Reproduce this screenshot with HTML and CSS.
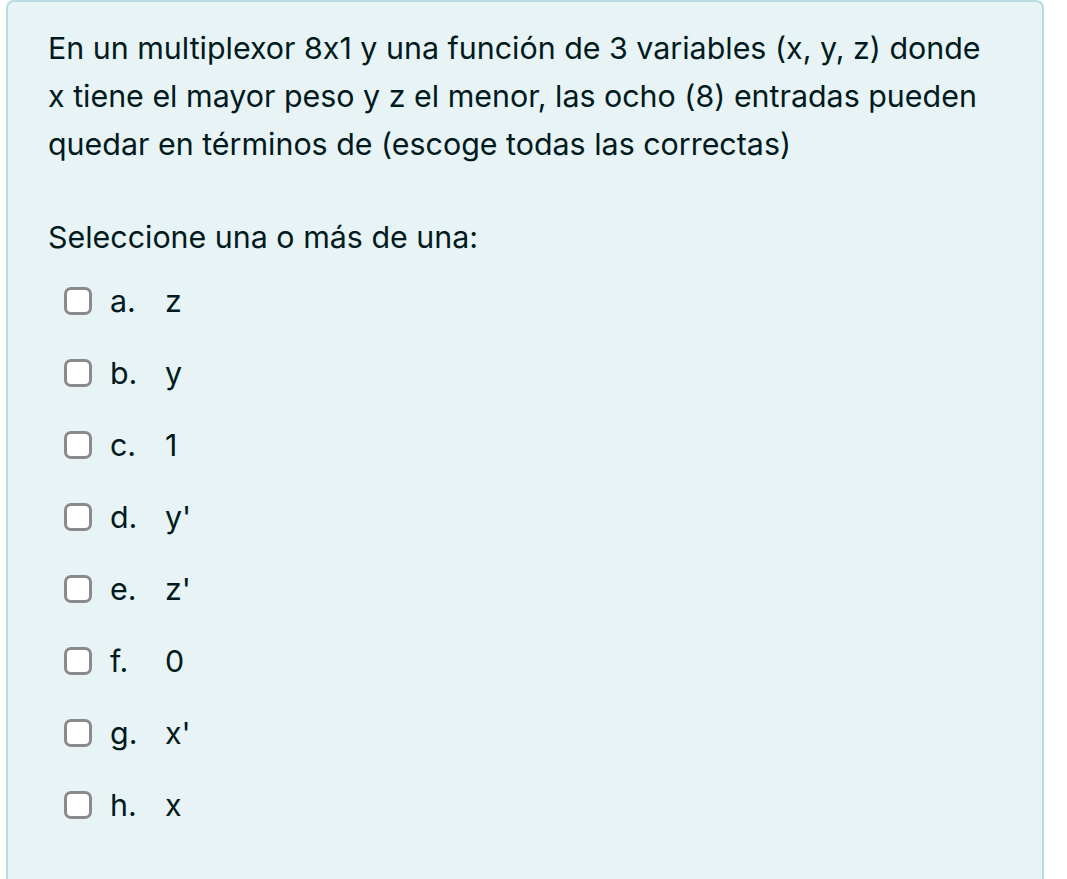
FILE: index.html
```html
<!DOCTYPE html>
<html lang="es">
<head>
<meta charset="utf-8">
<link rel="stylesheet" href="styles.css">
</head>
<body>
<div class="card">
  <p class="qtext">En un multiplexor 8x1 y una función de 3 variables (x, y, z) donde x tiene el mayor peso y z el menor, las ocho (8) entradas pueden quedar en términos de (escoge todas las correctas)</p>
  <p class="prompt">Seleccione una o más de una:</p>
  <div class="answers">
    <label class="opt"><span class="box"></span><span class="num">a.</span><span class="val">z</span></label>
    <label class="opt"><span class="box"></span><span class="num">b.</span><span class="val">y</span></label>
    <label class="opt"><span class="box"></span><span class="num">c.</span><span class="val">1</span></label>
    <label class="opt"><span class="box"></span><span class="num">d.</span><span class="val">y'</span></label>
    <label class="opt"><span class="box"></span><span class="num">e.</span><span class="val">z'</span></label>
    <label class="opt"><span class="box"></span><span class="num">f.</span><span class="val">0</span></label>
    <label class="opt"><span class="box"></span><span class="num">g.</span><span class="val">x'</span></label>
    <label class="opt"><span class="box"></span><span class="num">h.</span><span class="val">x</span></label>
  </div>
</div>
</body>
</html>
```

FILE: styles.css
```css
html, body {
  margin: 0;
  padding: 0;
  background: #ffffff;
}
body {
  font-family: Inter, "Noto Sans", "Liberation Sans", sans-serif;
  font-feature-settings: "calt" 0;
  color: #001a1e;
  font-size: 30.4px;
  line-height: 48px;
}
.card {
  margin-left: 6px;
  width: 1038px;
  height: 920px;
  background: #e7f3f5;
  border: 2px solid #b8dce2;
  border-bottom: none;
  border-radius: 8px 8px 0 0;
  padding: 22px 0 0 40px;
  box-sizing: border-box;
}
.qtext {
  margin: 0;
  width: 945px;
}
.prompt {
  margin: 45px 0 0 0;
}
.answers {
  margin-top: 4px;
  display: flex;
  flex-direction: column;
  padding-left: 16px;
}
.opt {
  display: flex;
  align-items: center;
  height: 72px;
}
.box {
  width: 28px;
  height: 28px;
  box-sizing: border-box;
  border: 3px solid #8a8a8c;
  border-radius: 7px;
  background: #ffffff;
  margin-right: 18px;
  flex: none;
}
.num {
  width: 55px;
  flex: none;
}
```
